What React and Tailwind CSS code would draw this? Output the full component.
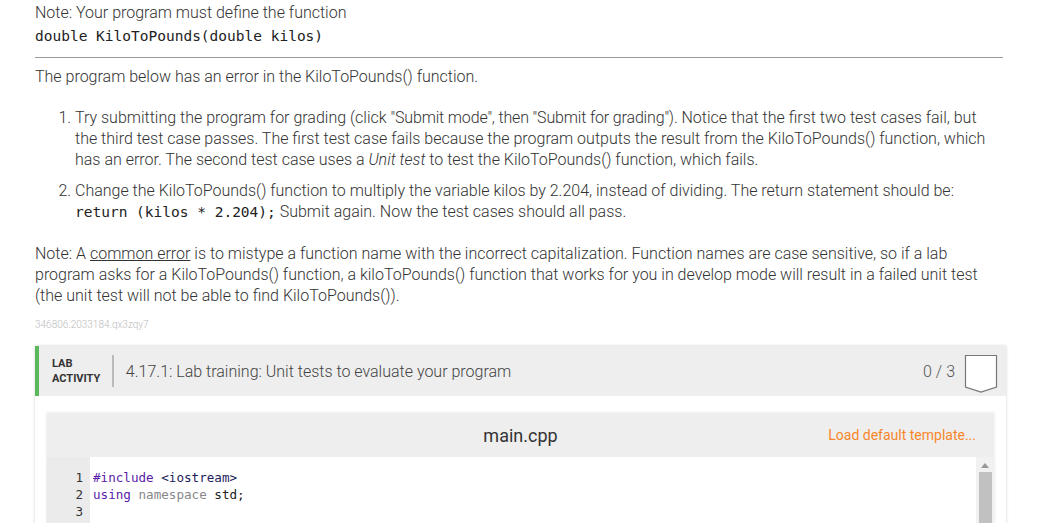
import React from 'react';

const mono = "font-['DejaVu_Sans_Mono','Liberation_Mono',monospace]";

const CodeLine = ({ n, children }) => (
  <div className="flex h-[17px] items-center">
    <div className="w-[43px] shrink-0 bg-[#ebebeb] pr-[7px] text-right text-[#333]">{n}</div>
    <div className="pl-[3px] whitespace-pre">{children}</div>
  </div>
);

const Badge = () => (
  <svg width="34" height="40" viewBox="0 0 34 40">
    <path d="M1.5 1.5 H32.5 V33 L17 38 L1.5 33 Z" fill="#fff" stroke="#777" strokeWidth="1.2" />
  </svg>
);

export default function App() {
  return (
    <div className="min-h-screen bg-white font-['Roboto','Liberation_Sans',sans-serif] font-light text-[16px] leading-[21px] text-[#333]">
      <div className="pl-[35px] pr-[45px] pt-[2px]">
        <p className="leading-[22px]">Note: Your program must define the function</p>
        <p className={`${mono} text-[14.5px] font-normal leading-[24px] text-[#222]`}>double KiloToPounds(double kilos)</p>
        <hr className="mt-[9px] border-t-[1.5px] border-[#999]" />

        <p className="mt-[8px]">The program below has an error in the KiloToPounds() function.</p>

        <ol className="mt-[20px] list-decimal pl-[40px] pr-[14px]">
          <li>
            Try submitting the program for grading (click <span className="tracking-[-0.01em]">"Submit mode", then "Submit for grading").</span> Notice that the first two test cases fail, but the third test case passes. The first test case fails because the program outputs the result from the KiloToPounds() function, which has an error. The second test case uses a <em>Unit test</em> to test the KiloToPounds() function, which fails.
          </li>
          <li className="mt-[10px]">
            Change the KiloToPounds() function to multiply the variable kilos by 2.204, instead of dividing. The return statement should be:{' '}
            <code className={`${mono} text-[14.5px] font-normal leading-[23px] text-[#222]`}>return (kilos * 2.204);</code> Submit again. Now the test cases should all pass.
          </li>
        </ol>

        <p className="mt-[19px]">
          Note: A <span className="underline">common error</span> is to mistype a function name with the incorrect capitalization. Function names are case sensitive, so if a lab program asks for a KiloToPounds() function, a kiloToPounds() function that works for you in develop mode will result in a failed unit test (the unit test will not be able to find KiloToPounds()).
        </p>

        <p className="mt-[12px] text-[10px] leading-[14px] text-[#bbb]">346806.2033184.qx3zqy7</p>
      </div>

      <div className="ml-[35px] mt-[14px] w-[971px] bg-white shadow-[0_0_3px_rgba(0,0,0,0.18)]">
        <div className="flex h-[50px] items-center border-l-[4px] border-[#5cb85c] bg-[#eeeeee] pr-[8px]">
          <div className="ml-[13px] text-[11px] font-bold leading-[15px] text-[#333]">
            <div>LAB</div>
            <div>ACTIVITY</div>
          </div>
          <div className="ml-[12px] h-[32px] w-[1.5px] bg-[#bbb]" />
          <div className="ml-[12px] text-[16px] text-[#444]">4.17.1: Lab training: Unit tests to evaluate your program</div>
          <div className="ml-auto mr-[9px] text-[16px] text-[#555]">0 / 3</div>
          <div className="mt-[6px]"><Badge /></div>
        </div>

        <div className="px-[12px] pt-[17px] pb-[40px]">
          <div className="bg-white shadow-[0_0_3px_rgba(0,0,0,0.12)]">
            <div className="relative flex h-[44px] items-center justify-center bg-[#eeeeee]">
              <span className="text-[18px] font-normal text-[#333]">main.cpp</span>
              <span className="absolute right-[18px] text-[14px] font-normal text-[#f7872a]">Load default template...</span>
            </div>
            <div className="flex">
              <div className={`flex-1 ${mono} text-[12.6px] font-normal text-[#222]`}>
                <div className="h-[12px] w-[43px] bg-[#ebebeb]" />
                <CodeLine n="1"><span className="text-[#5a1aa8]">#include</span> <span className="text-[#1d1d5c]">&lt;iostream&gt;</span></CodeLine>
                <CodeLine n="2"><span className="text-[#5a1aa8]">using</span> <span className="text-[#888]">namespace</span> std;</CodeLine>
                <CodeLine n="3">{''}</CodeLine>
                <CodeLine n="4"><span className="text-[#5a1aa8]">double</span> KiloToPounds(<span className="text-[#5a1aa8]">double</span> kilos) {'{'}</CodeLine>
                <CodeLine n="5">{''}</CodeLine>
              </div>
              <div className="flex w-[18px] flex-col items-center bg-[#f1f1f1]">
                <div className="mt-[6px] h-0 w-0 border-x-[4px] border-b-[5px] border-x-transparent border-b-[#999]" />
                <div className="mt-[4px] h-[80px] w-[13px] bg-[#c1c1c1]" />
              </div>
            </div>
          </div>
        </div>
      </div>
    </div>
  );
}
